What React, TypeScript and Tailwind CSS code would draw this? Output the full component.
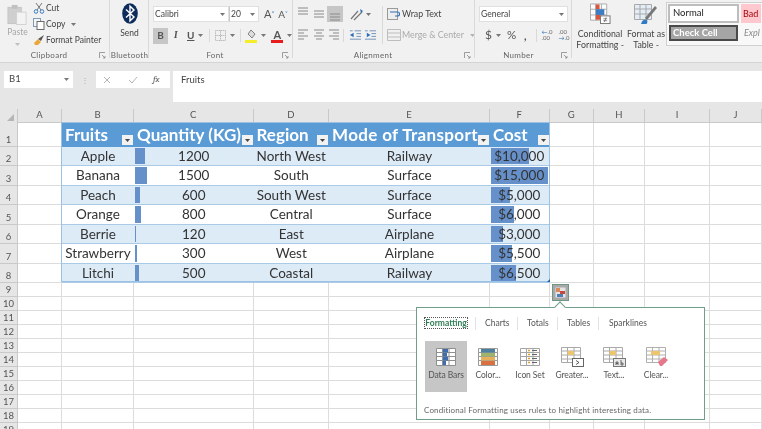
import type { ReactNode } from 'react';

const font = "font-['Lato','Open_Sans',sans-serif]";

const cols = ['A', 'B', 'C', 'D', 'E', 'F', 'G', 'H', 'I', 'J'];

const tableRows = [
  { fruit: 'Apple', qty: '1200', qtyBar: 9.5, region: 'North West', mode: 'Railway', cost: '$10,000', costBar: 38 },
  { fruit: 'Banana', qty: '1500', qtyBar: 11.5, region: 'South', mode: 'Surface', cost: '$15,000', costBar: 57 },
  { fruit: 'Peach', qty: '600', qtyBar: 5, region: 'South West', mode: 'Surface', cost: '$5,000', costBar: 19 },
  { fruit: 'Orange', qty: '800', qtyBar: 6, region: 'Central', mode: 'Surface', cost: '$6,000', costBar: 23 },
  { fruit: 'Berrie', qty: '120', qtyBar: 1, region: 'East', mode: 'Airplane', cost: '$3,000', costBar: 11.5 },
  { fruit: 'Strawberry', qty: '300', qtyBar: 2, region: 'West', mode: 'Airplane', cost: '$5,500', costBar: 21 },
  { fruit: 'Litchi', qty: '500', qtyBar: 4, region: 'Coastal', mode: 'Railway', cost: '$6,500', costBar: 25 },
];

function Caret({ className = '' }: { className?: string }) {
  return (
    <svg width="5" height="3" viewBox="0 0 5 3" className={className}>
      <path d="M0 0h5L2.5 3z" fill="#777" />
    </svg>
  );
}

function Launcher() {
  return (
    <svg width="7" height="7" viewBox="0 0 7 7" className="absolute right-[4px] bottom-[3px]">
      <path d="M.5 6V.5H6M3 3l3 3M6 4v2H4" fill="none" stroke="#888" strokeWidth="0.8" />
    </svg>
  );
}

function Group({ label, width, labelPad = '', launcher, children }: { label: string; width: string; labelPad?: string; launcher?: boolean; children: ReactNode }) {
  return (
    <div className={`relative flex flex-col shrink-0 ${width}`}>
      <div className="h-[49px]">{children}</div>
      <div className={`h-[13px] text-center text-[8px] leading-[13px] text-[#666] tracking-[0.3px] ${labelPad}`}>{label}</div>
      {launcher && <Launcher />}
      <div className="absolute right-0 top-0 h-[58px] w-px bg-[#d9d9d9]" />
    </div>
  );
}

function Lines({ kind }: { kind: 'left' | 'center' | 'right' | 'top' | 'mid' | 'bottom' }) {
  const rows = [3, 6, 9, 12];
  const ys = kind === 'top' ? [2, 5, 8] : kind === 'mid' ? [5, 8, 11] : kind === 'bottom' ? [8, 11, 14] : rows;
  return (
    <svg width="14" height="16" viewBox="0 0 14 16">
      {ys.map((y, i) => {
        const short = i % 2 === 1 && (kind === 'left' || kind === 'center' || kind === 'right');
        const x1 = short ? (kind === 'left' ? 2 : kind === 'center' ? 4 : 6) : 2;
        const x2 = short ? (kind === 'left' ? 8 : kind === 'center' ? 10 : 12) : 12;
        return <line key={y} x1={x1} x2={x2} y1={y} y2={y} stroke="#8a8a8a" strokeWidth="1" />;
      })}
    </svg>
  );
}

function Indent({ flip }: { flip?: boolean }) {
  return (
    <svg width="13" height="12" viewBox="0 0 14 12">
      <path d="M6 1.500h7M8 4.500h5M8 7.500h5M1 10.500h12M1 1.500h3" stroke="#6d8fb5" strokeWidth="1" fill="none" />
      <path d={flip ? 'M7 6L3 3.500v5z' : 'M1 6l4-2.500v5z'} fill="#2a6fb8" />
    </svg>
  );
}

function Clipboard() {
  return (
    <Group label="Clipboard" width="w-[110px]" labelPad="pr-[12px]" launcher>
      <div className="flex pl-[7px] pt-[3px]">
        <div className="flex flex-col items-center w-[21px]">
          <svg width="21" height="23" viewBox="0 0 22 23">
            <rect x="1" y="4" width="14" height="17" fill="#cfcfcf" stroke="#c4c4c4" />
            <rect x="5" y="1.500" width="6" height="4" fill="#c0c0c0" />
            <rect x="10" y="9" width="10" height="13" fill="#f3f3f3" stroke="#d2d2d2" />
          </svg>
          <div className="text-[8.5px] leading-[11px] mt-[1px] text-[#a6a6a6]">Paste</div>
          <Caret className="mt-[5px] opacity-40" />
        </div>
        <div className="ml-[5px] flex flex-col gap-[4px] text-[8.5px] leading-[12px] text-[#444] -mt-[1px]">
          <div className="flex items-center gap-[1px] h-[12px]">
            <svg width="12" height="12" viewBox="0 0 12 12">
              <path d="M3 1l5 7M9 1L4 8" stroke="#777" strokeWidth="1" fill="none" />
              <circle cx="3" cy="9.500" r="1.800" fill="none" stroke="#3b7cc2" />
              <circle cx="9" cy="9.500" r="1.800" fill="none" stroke="#3b7cc2" />
            </svg>
            <span>Cut</span>
          </div>
          <div className="flex items-center gap-[1px] h-[12px]">
            <svg width="12" height="12" viewBox="0 0 12 12">
              <rect x="0.500" y="0.500" width="7" height="8" fill="#f5f5f5" stroke="#7f9ab5" />
              <rect x="4" y="3.500" width="7" height="8" fill="#fff" stroke="#6a6a6a" />
            </svg>
            <span>Copy</span>
            <Caret className="ml-[5px]" />
          </div>
          <div className="flex items-center gap-[1px] h-[12px] whitespace-nowrap">
            <svg width="12" height="12" viewBox="0 0 12 12">
              <path d="M5 5l6-4-3 6z" fill="#555" />
              <path d="M1 9l4-4 3 3-3 3H2z" fill="#e8a93a" />
            </svg>
            <span>Format Painter</span>
          </div>
        </div>
      </div>
    </Group>
  );
}

function Bluetooth() {
  return (
    <Group label="Bluetooth" width="w-[39px]">
      <div className="flex flex-col items-center pt-[3px]">
        <svg width="16" height="21" viewBox="0 0 16 21">
          <ellipse cx="8" cy="10.500" rx="7.800" ry="10.300" fill="#0d2c5c" />
          <path d="M4 6.500l8 7.500-4 3.800V3.200l4 3.800-8 7.500" fill="none" stroke="#fff" strokeWidth="1.400" />
        </svg>
        <div className="mt-[3px] text-[8.5px] leading-[12px] text-[#444]">Send</div>
      </div>
    </Group>
  );
}

function Font() {
  return (
    <Group label="Font" width="w-[144px]" labelPad="pr-[12px]" launcher>
      <div className="pl-[4px] pt-[6px]">
        <div className="flex items-center h-[16px]">
          <div className="flex items-center justify-between w-[76px] h-full bg-white border border-[#e0e0e0] pl-[1px] pr-[3px] text-[8.5px] text-[#444]">
            Calibri
            <Caret />
          </div>
          <div className="flex items-center justify-between w-[30px] h-full bg-white border border-[#e0e0e0] border-l-[#c8c8c8] pl-[1px] pr-[3px] text-[8.5px] text-[#444]">
            20
            <Caret />
          </div>
          <span className="ml-[5px] text-[11px] text-[#555]">A<sup className="text-[5px] text-[#2a6fb8]">^</sup></span>
          <span className="ml-[4px] text-[10px] text-[#555]">A<sup className="text-[5px] text-[#2a6fb8]">˅</sup></span>
        </div>
        <div className="flex items-center h-[17px] mt-[5px] text-[10px] text-[#555]">
          <div className="flex items-center justify-center w-[15px] h-[16px] bg-[#c6c6c6] font-bold">B</div>
          <span className="ml-[6px] w-[6px] italic font-serif font-bold">I</span>
          <span className="ml-[7px] underline font-bold">U</span>
          <Caret className="ml-[4px]" />
          <div className="ml-[6px] w-px h-[13px] bg-[#d9d9d9]" />
          <svg width="11" height="11" viewBox="0 0 11 11" className="ml-[5px]">
            <path d="M.5.5h10v10H.5zM5.500.5v10M.5 5.500h10" fill="none" stroke="#b8b8b8" strokeDasharray="1.200 0.600" />
          </svg>
          <Caret className="ml-[4px]" />
          <div className="ml-[5px] w-px h-[13px] bg-[#d9d9d9]" />
          <svg width="12" height="15" viewBox="0 0 12 15" className="ml-[4px]">
            <path d="M3 6l3-4 4 4-3 4z" fill="#ddd" stroke="#666" strokeWidth="0.800" />
            <rect x="0" y="12" width="12" height="3" fill="#f4ee2a" />
          </svg>
          <Caret className="ml-[4px]" />
          <div className="ml-[5px] flex flex-col items-center w-[12px]">
            <span className="text-[11px] leading-[11px] font-bold text-[#555]">A</span>
            <div className="w-[12px] h-[3px] bg-[#e81c1c]" />
          </div>
          <Caret className="ml-[4px]" />
        </div>
      </div>
    </Group>
  );
}

function Alignment() {
  return (
    <Group label="Alignment" width="w-[182px]" labelPad="pr-[22px]" launcher>
      <div className="flex pl-[3px] pt-[6px]">
        <div className="w-[85px]">
          <div className="flex items-center h-[16px]">
            <Lines kind="top" />
            <div className="ml-[2px]"><Lines kind="mid" /></div>
            <div className="ml-[1px] flex justify-center w-[16px] h-[16px] bg-[#c6c6c6]"><Lines kind="bottom" /></div>
            <svg width="14" height="13" viewBox="0 0 14 13" className="ml-[7px]">
              <path d="M1 11l7-8M4 12l8-8" stroke="#777" strokeWidth="1.200" fill="none" />
              <path d="M10 1l3 2-2 2z" fill="#2a6fb8" />
            </svg>
            <Caret className="ml-[2px]" />
          </div>
          <div className="flex items-center h-[16px] mt-[5px]">
            <Lines kind="left" />
            <div className="ml-[2px]"><Lines kind="center" /></div>
            <div className="ml-[1px]"><Lines kind="right" /></div>
            <div className="ml-[2px] w-px h-[13px] bg-[#d9d9d9]" />
            <div className="ml-[5px]"><Indent /></div>
            <div className="ml-[2px]"><Indent flip /></div>
          </div>
        </div>
        <div className="w-px h-[38px] bg-[#d9d9d9] ml-[1px]" />
        <div className="pl-[4px] text-[8.8px] leading-[16px] text-[#444] whitespace-nowrap">
          <div className="flex items-center gap-[1px] h-[16px]">
            <svg width="14" height="12" viewBox="0 0 14 12">
              <rect x="0.500" y="0.500" width="10" height="11" fill="#eee" stroke="#9a9a9a" />
              <path d="M3 4h8c2 0 2 4 0 4H8" fill="none" stroke="#2a6fb8" strokeWidth="1.200" />
            </svg>
            <span>Wrap Text</span>
          </div>
          <div className="flex items-center gap-[1px] h-[16px] mt-[5px] text-[#ababab]">
            <svg width="14" height="12" viewBox="0 0 14 12">
              <path d="M.5.5h13v11H.5zM.5 4h13M.5 8h13" fill="none" stroke="#bdbdbd" />
            </svg>
            <span>Merge &amp; Center</span>
            <Caret className="ml-[5px] opacity-50" />
          </div>
        </div>
      </div>
    </Group>
  );
}

function NumberGroup() {
  return (
    <Group label="Number" width="w-[97px]" labelPad="pr-[10px]" launcher>
      <div className="pl-[4px] pt-[6px]">
        <div className="flex items-center justify-between w-[89px] h-[16px] bg-white border border-[#e0e0e0] pl-[1px] pr-[3px] text-[8.5px] text-[#444]">
          General
          <Caret />
        </div>
        <div className="flex items-center h-[16px] mt-[5px] text-[#555]">
          <span className="ml-[6px] text-[12px] w-[8px]">$</span>
          <Caret className="ml-[3px]" />
          <span className="ml-[6px] text-[11.5px] w-[12px]">%</span>
          <span className="ml-[5px] text-[11px] font-bold leading-[11px]">,</span>
          <div className="ml-[9px] w-px h-[13px] bg-[#d9d9d9]" />
          <span className="ml-[5px] w-[12px] text-[6px] leading-[6px] text-[#666]"><span className="text-[#2a6fb8]">←</span>.0<br />.00</span>
          <span className="ml-[5px] w-[12px] text-[6px] leading-[6px] text-[#666]">.00<br /><span className="text-[#2a6fb8]">→</span>.0</span>
        </div>
      </div>
    </Group>
  );
}

function Styles() {
  return (
    <div className="flex flex-1 min-w-0 pl-[1px] pt-[2px]">
      <div className="flex flex-col items-center w-[54px] shrink-0 text-[8.8px] leading-[11px] text-[#444]">
        <svg width="21" height="22" viewBox="0 0 22 22" className="mt-[1px]">
          <path d="M.5.5h17v17H.5zM.5 6h17M.5 12h17M6 .5v17M12 .5v17" fill="#fff" stroke="#aaa" />
          <rect x="6" y="1" width="4" height="5" fill="#d9553c" />
          <rect x="6" y="6" width="9" height="6" fill="#3d7dc4" />
          <rect x="6" y="12" width="5" height="5" fill="#d9553c" />
          <rect x="11" y="13" width="10" height="8" fill="#fff" stroke="#777" />
          <path d="M14 16h4M14 18h4M17 14.500l-2 5" stroke="#555" strokeWidth="0.700" />
        </svg>
        <div className="mt-[3px] whitespace-nowrap">Conditional</div>
        <div className="whitespace-nowrap">Formatting ⁃</div>
      </div>
      <div className="flex flex-col items-center w-[38px] shrink-0 text-[8.8px] leading-[11px] text-[#444]">
        <svg width="24" height="22" viewBox="0 0 24 22" className="mt-[1px]">
          <path d="M.5 1.500h17v15H.5zM.5 6h17M.5 11h17M6 1.500v15M12 1.500v15" fill="#e3edf6" stroke="#a9a9a9" />
          <path d="M21 3L11 15l2 2L23 5z" fill="#777" />
          <path d="M7 21c1-4 3-5 6-4 1 2 0 4-1 4z" fill="#2f7bc6" />
        </svg>
        <div className="mt-[3px] whitespace-nowrap">Format as</div>
        <div className="whitespace-nowrap">Table ⁃</div>
      </div>
      <div className="flex flex-col gap-[2px] h-[44px] flex-1 min-w-0 overflow-hidden border border-r-0 border-[#d0d0d0] bg-[#f8f8f8] p-[1px] ml-[1px] text-[9.5px]">
        <div className="flex h-[19px]">
          <div className="flex items-center w-[71px] shrink-0 bg-white border-2 border-[#bdbdbd] pl-[3px] text-[#222]">Normal</div>
          <div className="flex items-center flex-1 ml-[2px] pl-[2px] bg-[#ffc7ce] text-[9px] text-[#9c0006]">Bad</div>
        </div>
        <div className="flex h-[16px]">
          <div className="flex items-center w-[69px] ml-[1px] shrink-0 bg-[#a5a5a5] border-2 border-[#4a4a4a] pl-[2px] font-bold text-white">Check Cell</div>
          <div className="flex items-center pl-[6px] text-[9px] italic text-[#8a8a8a]">Expl</div>
        </div>
      </div>
    </div>
  );
}

function FormulaBar() {
  return (
    <div className="flex h-[46px] bg-[#e6e6e6] pt-[8px] pl-[4px]">
      <div className="flex items-center justify-between w-[69px] h-[17px] bg-white pl-[5px] pr-[4px] text-[9.5px] text-[#444]">
        B1
        <Caret />
      </div>
      <div className="w-[23px] h-[17px] flex items-center justify-center text-[8px] text-[#aaa]">⋮</div>
      <div className="flex items-center w-[74px] h-[17px] bg-white text-[#a9a9a9]">
        <svg width="8" height="8" viewBox="0 0 8 8" className="ml-[7px]">
          <path d="M1 1l6 6M7 1L1 7" stroke="#b5b5b5" />
        </svg>
        <svg width="10" height="8" viewBox="0 0 10 8" className="ml-[17px]">
          <path d="M1 4l3 3 5-6" stroke="#b5b5b5" fill="none" />
        </svg>
        <span className="ml-[15px] text-[9px] italic font-serif text-[#555]">fx</span>
      </div>
      <div className="ml-[3px] flex-1 h-[31px] bg-white pl-[8px] pt-[2px] text-[9.5px] leading-[14px] text-[#444]">Fruits</div>
    </div>
  );
}

function Filter() {
  return (
    <div className="absolute right-[1px] bottom-[2px] flex items-center justify-center w-[11px] h-[10px] bg-[#f2f2f2]">
      <svg width="5" height="3" viewBox="0 0 5 3"><path d="M0 0h5L2.500 3z" fill="#444" /></svg>
    </div>
  );
}

function DataCell({ text, bar, band, last }: { text: string; bar?: number; band: boolean; last?: boolean }) {
  return (
    <div className={`relative flex items-center justify-center whitespace-nowrap text-[13.5px] text-[#333] border-b border-[#a9cbe8] ${band ? 'bg-[#ddebf7]' : 'bg-white'} ${last ? 'border-r' : ''}`}>
      {bar !== undefined && (
        <div className="absolute left-[1px] top-[1px] bottom-[1px] bg-[#6690ca]" style={{ width: bar }} />
      )}
      <span className="relative">{text}</span>
    </div>
  );
}

function HeadCell({ text, extra = '' }: { text: string; extra?: string }) {
  return (
    <div className={`relative flex items-center pl-[3px] whitespace-nowrap bg-[#5b9bd5] text-[17px] font-bold text-white ${extra}`}>
      {text}
      <Filter />
    </div>
  );
}

function RowHead({ n }: { n: number }) {
  return (
    <div className="flex items-end justify-center bg-[#e6e6e6] border-r border-b border-[#c9c9c9] text-[9.5px] leading-[13px] text-[#555]">{n}</div>
  );
}

function Sheet() {
  const blanks = (keyBase: string, count: number) =>
    Array.from({ length: count }, (_, i) => (
      <div key={`${keyBase}-${i}`} className="bg-white border-r border-b border-[#dcdcdc]" />
    ));

  return (
    <div className="grid grid-cols-[18px_44px_72px_119.5px_75.5px_161px_59.5px_44.5px_51px_65px_52px] grid-rows-[14px_24px_19px_20px_19px_20px_19px_20px_19px] auto-rows-[14px] text-[#555]">
      <div className="flex items-end justify-end bg-[#e6e6e6] border-r border-[#c9c9c9] pr-[3px] pb-[2px]">
        <svg width="7" height="7" viewBox="0 0 7 7"><path d="M7 0v7H0z" fill="#b5b5b5" /></svg>
      </div>
      {cols.map((c) => (
        <div key={c} className="flex items-center justify-center bg-[#e6e6e6] border-r border-b border-[#c9c9c9] text-[9.5px]">{c}</div>
      ))}

      <RowHead n={1} />
      {blanks('r1a', 1)}
      <HeadCell text="Fruits" />
      <HeadCell text="Quantity (KG)" />
      <HeadCell text="Region" />
      <HeadCell text="Mode of Transport" extra="tracking-[0.35px]" />
      <HeadCell text="Cost" />
      {blanks('r1b', 4)}

      {tableRows.map((r, i) => (
        <div key={r.fruit} className="contents">
          <RowHead n={i + 2} />
          {blanks(`r${i}a`, 1)}
          <DataCell text={r.fruit} band={i % 2 === 0} />
          <DataCell text={r.qty} bar={r.qtyBar} band={i % 2 === 0} />
          <DataCell text={r.region} band={i % 2 === 0} />
          <DataCell text={r.mode} band={i % 2 === 0} />
          <DataCell text={r.cost} bar={r.costBar} band={i % 2 === 0} last />
          {blanks(`r${i}b`, 4)}
        </div>
      ))}

      {[9, 10, 11, 12, 13, 14, 15, 16, 17, 18, 19].map((n) => (
        <div key={n} className="contents">
          <RowHead n={n} />
          {blanks(`e${n}`, 10)}
        </div>
      ))}
    </div>
  );
}

function QuickItem({ label, active, children }: { label: string; active?: boolean; children: ReactNode }) {
  return (
    <div className={`flex flex-col items-center w-[42px] h-[51px] pt-[6px] text-[8.5px] tracking-[-0.1px] leading-[12px] text-[#555] whitespace-nowrap ${active ? 'bg-[#c6c6c6]' : ''}`}>
      <div className="flex items-center justify-center h-[20px] w-[28px]">{children}</div>
      <div className="mt-[2px]">{label}</div>
    </div>
  );
}

const gridPath = 'M.5.5h19v17H.5zM.5 4.500h19M.5 8.500h19M.5 12.500h19M6.500.5v17M13 .5v17';
const cfPath = 'M.5.5h19v15H.5zM.5 4h19M.5 8h19M.5 12h19M6.500.5v15M13 .5v15';

function QuickAnalysis() {
  const tabs = ['Charts', 'Totals', 'Tables', 'Sparklines'];
  return (
    <>
      <div className="absolute left-[552px] top-[284px] flex items-center justify-center w-[17px] h-[17px] bg-[#a9a9a9] border border-[#6f9583]">
        <svg width="11" height="11" viewBox="0 0 11 11">
          <rect x="0.500" y="0.500" width="10" height="10" fill="#e4e4e4" />
          <rect x="1" y="1" width="4" height="4" fill="#d98a5a" />
          <rect x="5" y="4" width="5" height="3" fill="#c8473e" />
          <rect x="2" y="7" width="6" height="3" fill="#4f7fb8" />
        </svg>
      </div>
      <div className="absolute left-[556px] top-[303px] w-[8px] h-[8px] rotate-45 bg-white border-l border-t border-[#6f9f88] z-10" />
      <div className="absolute left-[416px] top-[307px] w-[289px] h-[113px] bg-white border border-[#6f9f88] pl-[7px]">
        <div className="flex items-center h-[16px] mt-[7px] text-[8.5px] text-[#555]">
          <div className="w-[44px] h-[12px] leading-[10px] text-center font-bold text-[#2f7d55] border border-dotted border-[#555] whitespace-nowrap">Formatting</div>
          <div className="w-px h-[13px] ml-[7px] bg-[#e2e2e2]" />
          <span className="ml-[9px] w-[24px]">{tabs[0]}</span>
          <div className="w-px h-[13px] ml-[8px] bg-[#e2e2e2]" />
          <span className="ml-[9px] w-[21px]">{tabs[1]}</span>
          <div className="w-px h-[13px] ml-[9px] bg-[#e2e2e2]" />
          <span className="ml-[9px] w-[23px]">{tabs[2]}</span>
          <div className="w-px h-[13px] ml-[8px] bg-[#e2e2e2]" />
          <span className="ml-[10px]">{tabs[3]}</span>
        </div>
        <div className="flex mt-[10px] ml-[1px]">
          <QuickItem label="Data Bars" active>
            <svg width="20" height="18" viewBox="0 0 20 18">
              <path d={gridPath} fill="#fff" stroke="#8f8f8f" />
              <rect x="7" y="1" width="5" height="3.500" fill="#3d6fb0" />
              <rect x="7" y="5" width="4" height="3.500" fill="#3d6fb0" />
              <rect x="7" y="9" width="5" height="3.500" fill="#3d6fb0" />
              <rect x="7" y="13" width="3" height="4" fill="#3d6fb0" />
            </svg>
          </QuickItem>
          <QuickItem label="Color...">
            <svg width="20" height="18" viewBox="0 0 20 18">
              <path d={gridPath} fill="#fff" stroke="#9a9a9a" />
              <rect x="3" y="1" width="14" height="3.500" fill="#4d7f9f" />
              <rect x="3" y="5" width="14" height="3.500" fill="#9fb46b" />
              <rect x="3" y="9" width="14" height="3.500" fill="#e8b05a" />
              <rect x="3" y="13" width="14" height="4" fill="#d9703f" />
            </svg>
          </QuickItem>
          <QuickItem label="Icon Set">
            <svg width="20" height="18" viewBox="0 0 20 18">
              <path d={gridPath} fill="#fff" stroke="#a5a5a5" />
              <path d="M8 2.500h2M8 6.500h2M8 10.500h2M8 14.500h2" stroke="#e0a030" strokeWidth="1.500" />
              <path d="M12 2.500h5M12 6.500h5M12 10.500h5M12 14.500h5" stroke="#666" />
            </svg>
          </QuickItem>
          <QuickItem label="Greater...">
            <svg width="23" height="20" viewBox="0 0 23 20">
              <path d={cfPath} fill="#fff" stroke="#a9a9a9" />
              <rect x="6.500" y="4" width="6.500" height="4" fill="#ecc56e" />
              <rect x="11.500" y="11.500" width="11" height="8" fill="#fff" stroke="#666" />
              <path d="M15 13.500l3 2-3 2" stroke="#333" fill="none" strokeWidth="0.800" />
            </svg>
          </QuickItem>
          <QuickItem label="Text...">
            <svg width="23" height="20" viewBox="0 0 23 20">
              <path d={cfPath} fill="#fff" stroke="#a9a9a9" />
              <rect x="6.500" y="4" width="6.500" height="4" fill="#ecc56e" />
              <rect x="10.500" y="11.500" width="12" height="8" fill="#e8e8e8" stroke="#777" />
              <path d="M13 18v-3h2v3M13 16.500h2M18 13v5h2v-2h-2" stroke="#333" fill="none" strokeWidth="0.700" />
            </svg>
          </QuickItem>
          <QuickItem label="Clear...">
            <svg width="23" height="20" viewBox="0 0 23 20" className="ml-[2px]">
              <path d={cfPath} fill="#fff" stroke="#b0b0b0" />
              <rect x="5" y="4" width="9" height="4" fill="#ecc56e" />
              <path d="M12 15l6-5 4 3-6 6h-2z" fill="#e5788a" />
            </svg>
          </QuickItem>
        </div>
        <div className="mt-[12px] text-[8px] leading-[12px] tracking-[0.15px] text-[#666] whitespace-nowrap">
          Conditional Formatting uses rules to highlight interesting data.
        </div>
      </div>
    </>
  );
}

export default function App() {
  return (
    <div className={`relative w-[762px] h-[429px] overflow-hidden bg-white blur-[0.4px] ${font}`}>
      <div className="flex h-[63px] bg-[#f1f1f1] border-b border-[#d4d4d4]">
        <Clipboard />
        <Bluetooth />
        <Font />
        <Alignment />
        <NumberGroup />
        <Styles />
      </div>
      <FormulaBar />
      <Sheet />
      <div className="absolute left-[61px] top-[122px] w-[489px] h-[160px] border border-[#9bc2e6] pointer-events-none" />
      <div className="absolute left-[547px] top-[279px] w-0 h-0 border-l-[3px] border-l-transparent border-b-[3px] border-b-[#2a5f9e]" />
      <QuickAnalysis />
    </div>
  );
}
